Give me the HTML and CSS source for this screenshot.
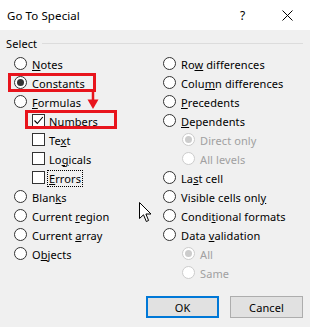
FILE: index.html
```html
<!DOCTYPE html>
<html>
<head>
<meta charset="utf-8">
<link rel="stylesheet" href="styles.css">
</head>
<body>
<div class="window">
  <div class="titlebar">
    <span class="title">Go To Special</span>
    <span class="help">?</span>
    <span class="close"><svg width="11" height="11" viewBox="0 0 11 11"><path d="M0.5 0.5 L10.5 10.5 M10.5 0.5 L0.5 10.5" stroke="#000" stroke-width="1" fill="none"/></svg></span>
  </div>
  <div class="content">
    <div class="legend"><span class="legend-text">Select</span><span class="rule"></span></div>
    <div class="cols">
      <div class="col">
        <div class="opt"><span class="radio"></span><span class="lbl"><u>N</u>otes</span></div>
        <div class="opt"><span class="radio checked"></span><span class="lbl">C<u>o</u>nstants</span></div>
        <div class="opt"><span class="radio"></span><span class="lbl"><u>F</u>ormulas</span></div>
        <div class="opt sub-check"><span class="check checked"><svg width="11" height="11" viewBox="0 0 11 11"><path d="M1.5 5.5 L4.3 8.5 L9.8 2" stroke="#000" stroke-width="1.1" fill="none"/></svg></span><span class="lbl">N<u>u</u>mbers</span></div>
        <div class="opt sub-check"><span class="check"></span><span class="lbl">Te<u>x</u>t</span></div>
        <div class="opt sub-check"><span class="check"></span><span class="lbl">Lo<u>g</u>icals</span></div>
        <div class="opt sub-check"><span class="check"></span><span class="lbl focus"><u>E</u>rrors</span></div>
        <div class="opt"><span class="radio"></span><span class="lbl">Blan<u>k</u>s</span></div>
        <div class="opt"><span class="radio"></span><span class="lbl">Current <u>r</u>egion</span></div>
        <div class="opt"><span class="radio"></span><span class="lbl">Current <u>a</u>rray</span></div>
        <div class="opt"><span class="radio"></span><span class="lbl">O<u>b</u>jects</span></div>
      </div>
      <div class="col">
        <div class="opt"><span class="radio"></span><span class="lbl">Ro<u>w</u> differences</span></div>
        <div class="opt"><span class="radio"></span><span class="lbl">Colu<u>m</u>n differences</span></div>
        <div class="opt"><span class="radio"></span><span class="lbl"><u>P</u>recedents</span></div>
        <div class="opt"><span class="radio"></span><span class="lbl"><u>D</u>ependents</span></div>
        <div class="opt sub-radio disabled"><span class="radio checked"></span><span class="lbl">Direct only</span></div>
        <div class="opt sub-radio disabled"><span class="radio"></span><span class="lbl">All levels</span></div>
        <div class="opt"><span class="radio"></span><span class="lbl">La<u>s</u>t cell</span></div>
        <div class="opt"><span class="radio"></span><span class="lbl">Visible cells onl<u>y</u></span></div>
        <div class="opt"><span class="radio"></span><span class="lbl">Condi<u>t</u>ional formats</span></div>
        <div class="opt"><span class="radio"></span><span class="lbl">Data <u>v</u>alidation</span></div>
        <div class="opt sub-radio disabled"><span class="radio checked"></span><span class="lbl">All</span></div>
        <div class="opt sub-radio disabled"><span class="radio"></span><span class="lbl">Same</span></div>
      </div>
    </div>
    <div class="buttons">
      <div class="btn default">OK</div>
      <div class="btn">Cancel</div>
    </div>
  </div>
  <div class="mark mark-constants"></div>
  <div class="mark mark-numbers"></div>
  <svg class="arrow" width="14" height="20" viewBox="0 0 14 20"><path d="M7 0 V10" stroke="#e8141c" stroke-width="2.5"/><path d="M1.5 8.5 H12.5 L7 18 Z" fill="#e8141c"/></svg>
  <svg class="cursor" width="14" height="21" viewBox="0 0 14 21"><path d="M0.5 0.5 V16.5 L4.5 12.8 L7.3 19.5 L9.6 18.5 L6.9 12 H12 Z" fill="#fff" stroke="#000" stroke-width="1" stroke-linejoin="miter"/></svg>
</div>
</body>
</html>
```
FILE: styles.css
```css
* { box-sizing: border-box; }
html, body { margin: 0; padding: 0; }
body {
  width: 310px;
  height: 327px;
  overflow: hidden;
  background: #f0f0f0;
  font-family: "Noto Sans", "Open Sans", sans-serif;
  font-size: 11px;
  letter-spacing: 0.1px;
  color: #000;
}
.window {
  position: relative;
  width: 310px;
  height: 327px;
  background: #f0f0f0;
}
.titlebar {
  height: 30px;
  background: #fff;
  display: flex;
  align-items: center;
  padding-left: 7px;
}
.title { flex: 1; font-size: 11.5px; }
.help { width: 8px; margin-right: 34px; font-size: 12px; }
.close { width: 11px; height: 11px; margin-right: 17px; display: flex; }
.content { padding: 6px 0 0 0; }
.legend {
  display: flex;
  align-items: center;
  height: 14px;
  padding-left: 6px;
  padding-right: 7px;
}
.legend-text { margin-right: 5px; }
.rule { flex: 1; height: 1px; background: #dcdcdc; }
.cols {
  display: grid;
  grid-template-columns: 149px 1fr;
  padding-left: 14px;
  margin-top: 4px;
}
.col { display: flex; flex-direction: column; }
.opt {
  height: 19px;
  display: flex;
  align-items: center;
  white-space: nowrap;
}
.lbl { position: relative; top: 0.5px; }
.radio {
  width: 13px;
  height: 13px;
  border: 1px solid #333;
  border-radius: 50%;
  background: #fff;
  margin-right: 5px;
  flex: none;
  display: flex;
  align-items: center;
  justify-content: center;
}
.radio.checked::after {
  content: "";
  width: 7px;
  height: 7px;
  border-radius: 50%;
  background: #333;
}
.check {
  width: 13px;
  height: 13px;
  border: 1px solid #333;
  background: #fff;
  margin-right: 4px;
  flex: none;
  display: flex;
  align-items: center;
  justify-content: center;
}
.sub-check { margin-left: 18px; }
.sub-radio { margin-left: 19px; }
.disabled { color: #a0a0a0; }
.disabled .radio { border-color: #cccccc; background: #fff; }
.disabled .radio.checked::after { background: #cccccc; }
.lbl u { text-underline-offset: 1px; }
.focus { outline: 1px dotted #000; outline-offset: 0; padding: 0 1px; margin-left: -1px; }
.buttons {
  display: flex;
  justify-content: flex-end;
  gap: 11px;
  padding-right: 7px;
  margin-top: 14px;
}
.btn {
  width: 73px;
  height: 22px;
  border: 1px solid #adadad;
  background: #e1e1e1;
  display: flex;
  align-items: center;
  justify-content: center;
}
.btn.default { border: 2px solid #0078d7; }
.mark {
  position: absolute;
  border: 3px solid #e8141c;
}
.mark-constants { left: 8px; top: 73px; width: 88px; height: 19px; }
.mark-numbers { left: 25px; top: 110px; width: 92px; height: 19px; }
.arrow { position: absolute; left: 86px; top: 91px; }
.cursor { position: absolute; left: 139px; top: 202px; }
```
